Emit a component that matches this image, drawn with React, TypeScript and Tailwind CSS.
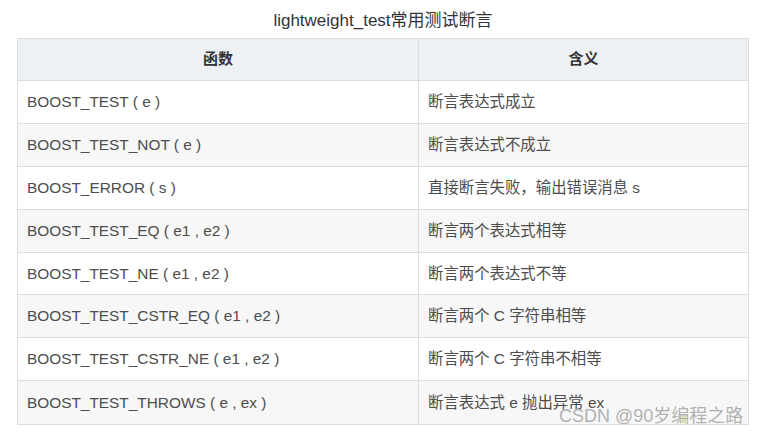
import React from "react";

const rows: [string, string][] = [
  ["BOOST_TEST ( e )", "断言表达式成立"],
  ["BOOST_TEST_NOT ( e )", "断言表达式不成立"],
  ["BOOST_ERROR ( s )", "直接断言失败，输出错误消息 s"],
  ["BOOST_TEST_EQ ( e1 , e2 )", "断言两个表达式相等"],
  ["BOOST_TEST_NE ( e1 , e2 )", "断言两个表达式不等"],
  ["BOOST_TEST_CSTR_EQ ( e1 , e2 )", "断言两个 C 字符串相等"],
  ["BOOST_TEST_CSTR_NE ( e1 , e2 )", "断言两个 C 字符串不相等"],
  ["BOOST_TEST_THROWS ( e , ex )", "断言表达式 e 抛出异常 ex"],
];

export default function App() {
  return (
    <div
      className="relative w-[769px] h-[439px] bg-white overflow-hidden"
      style={{ fontFamily: '"Liberation Sans", Arial, "Noto Sans CJK SC", sans-serif' }}
    >
      <div className="pl-[17px] w-[749px]">
        <div className="h-[38px] pt-[10px] text-center text-[17px] leading-[22px] text-[#333]">
          lightweight_test常用测试断言
        </div>
        <div className="border border-[#dddddd] text-[15.4px] text-[#4d4d4d]">
          <div className="flex h-[42px] bg-[#eef1f4] border-b border-[#dddddd] font-bold text-[#333] text-[15px]">
            <div className="w-[401px] border-r border-[#dddddd] flex items-center justify-center">函数</div>
            <div className="flex-1 flex items-center justify-center">含义</div>
          </div>
          {rows.map(([fn, desc], i) => (
            <div
              key={i}
              className={`flex ${i === 4 ? "h-[42px]" : "h-[43px]"} ${
                i < rows.length - 1 ? "border-b border-[#dddddd]" : ""
              } ${i % 2 === 1 ? "bg-[#f7f7f7]" : "bg-white"}`}
            >
              <div className="w-[401px] border-r border-[#dddddd] flex items-center px-[9px]">{fn}</div>
              <div className="flex-1 flex items-center px-[9px]">{desc}</div>
            </div>
          ))}
        </div>
      </div>
      <div className="absolute left-[559px] top-[404px] text-[18px] leading-[24px] text-[#a8a8a8]/90 whitespace-nowrap">
        CSDN @90岁编程之路
      </div>
    </div>
  );
}
